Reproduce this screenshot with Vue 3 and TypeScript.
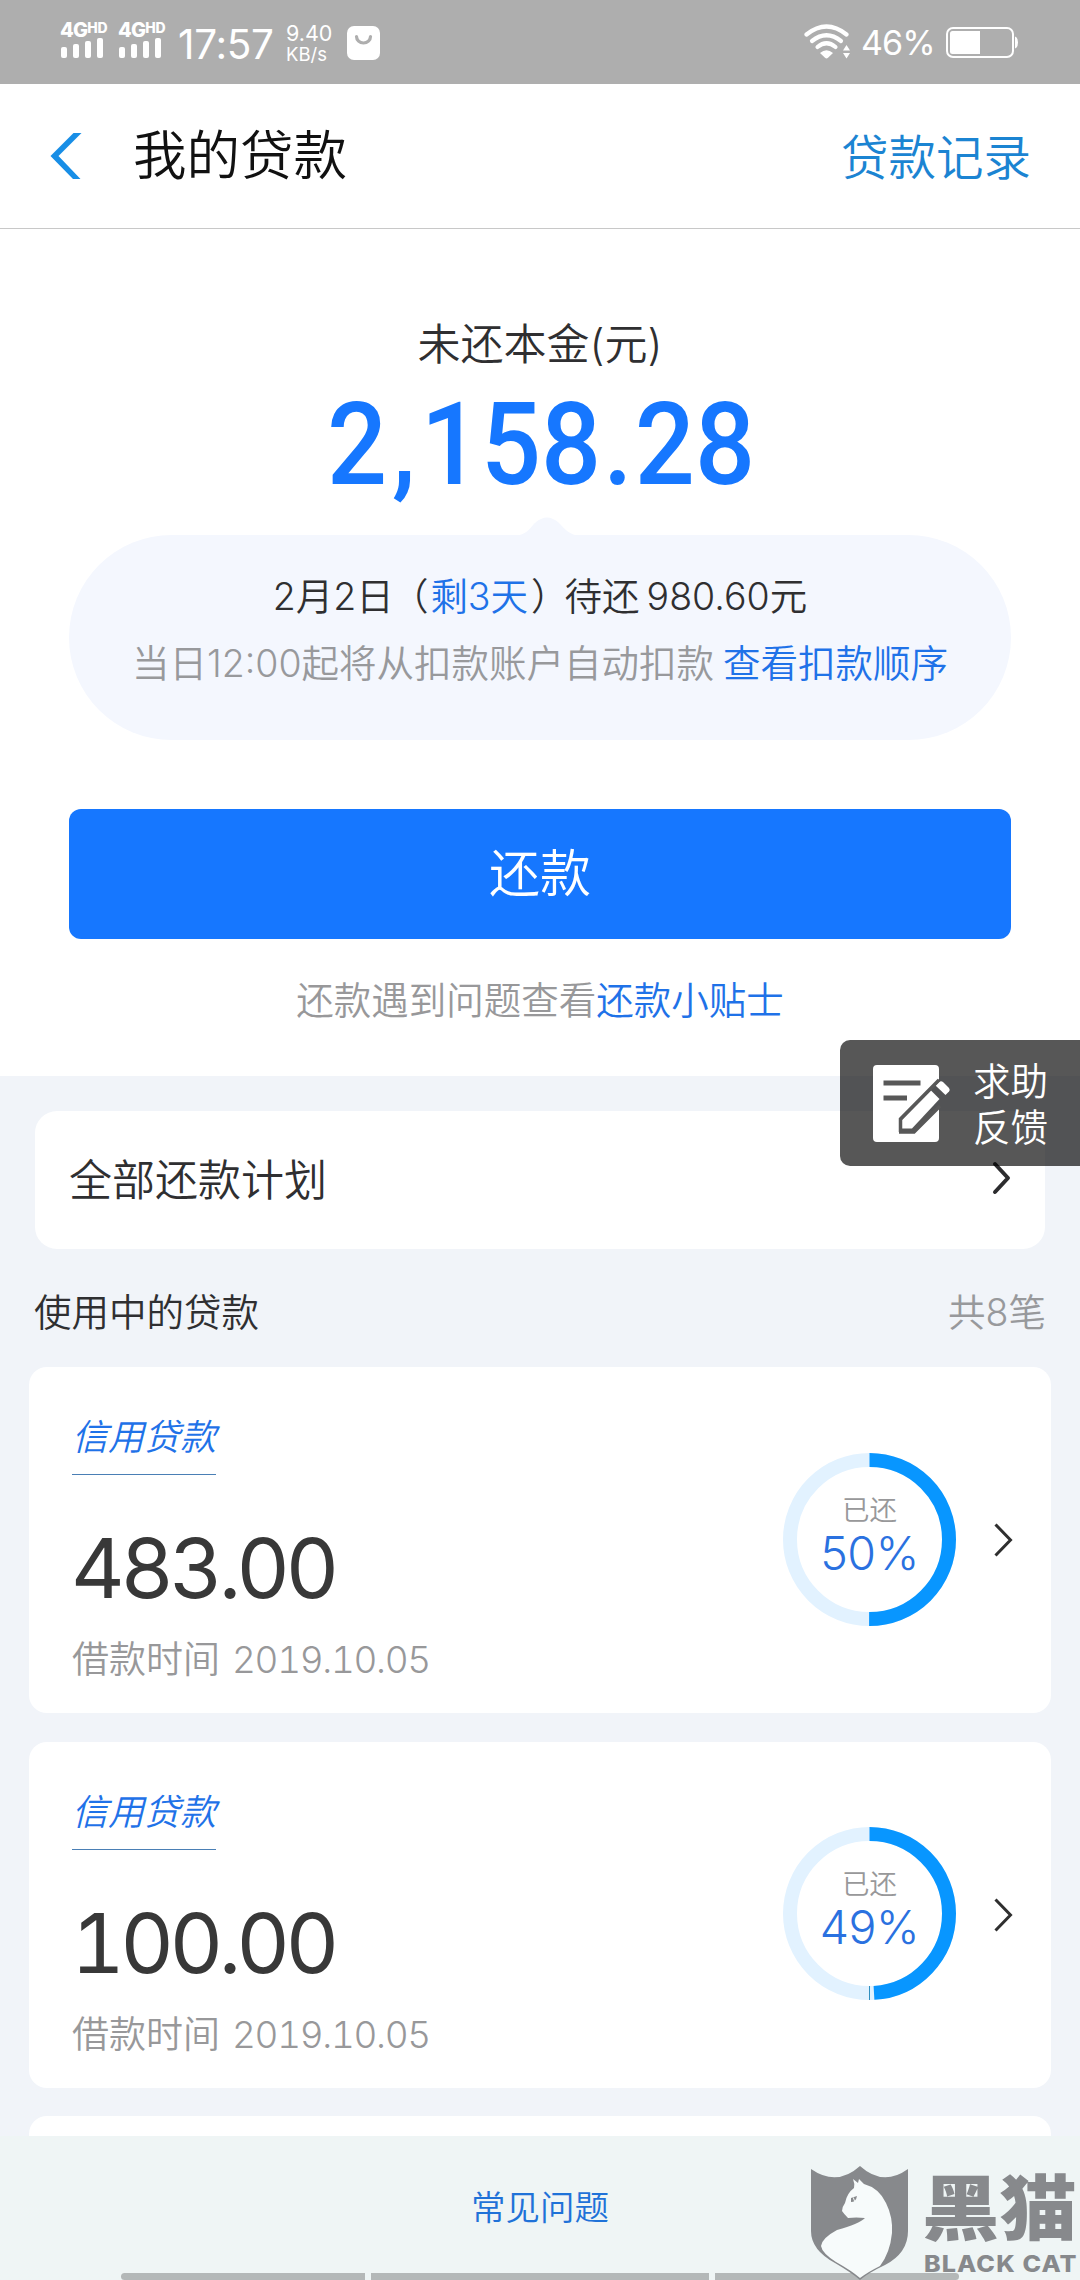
<script setup lang="ts">
interface Loan {
  id: number
  type: string
  amount: string
  date: string
  percent: number
}

const loans: Loan[] = [
  { id: 1, type: '信用贷款', amount: '483.00', date: '2019.10.05', percent: 50 },
  { id: 2, type: '信用贷款', amount: '100.00', date: '2019.10.05', percent: 49 },
]

const RADIUS = 79.5
const CIRC = 2 * Math.PI * RADIUS
const dash = (percent: number): string => `${(CIRC * percent) / 100} ${CIRC}`
</script>

<template>
  <div class="page">
    <div class="status">
      <div v-for="n in 2" :key="n" class="signal">
        <div class="net"><b>4G</b><i>HD</i></div>
        <div class="bars"><span class="b1" /><span class="b2" /><span class="b3" /><span class="b4" /></div>
      </div>
      <div class="clock">17:57</div>
      <div class="speed"><span class="rate">9.40</span><span class="unit">KB/s</span></div>
      <svg class="bag" width="33" height="34" viewBox="0 0 33 34">
        <rect width="33" height="34" rx="7" fill="#fff" />
        <path d="M9.5 10.500a7 6.500 0 0 0 14 0" fill="none" stroke="#aeaeae" stroke-width="3.200" stroke-linecap="round" />
      </svg>
      <div class="spacer" />
      <svg class="wifi" width="48" height="36" viewBox="0 0 48 36">
        <g fill="none" stroke="#fff" stroke-width="4.200" stroke-linecap="round">
          <path d="M2.500 10.500Q22.500 -5.500 42.500 10.500" />
          <path d="M8 17Q22.500 5.500 37 17" />
          <path d="M13.500 23Q22.500 15.500 31.500 23" />
        </g>
        <path d="M16 29Q22.500 23.500 29 29L24 33.800Q22.500 35 21 33.800Z" fill="#fff" />
        <path d="M39 26.500L42.500 21L46 26.500ZM39 29L42.500 34.500L46 29Z" fill="#fff" />
      </svg>
      <div class="level">46%</div>
      <svg class="battery" width="73" height="32" viewBox="0 0 73 32">
        <rect x="1" y="1" width="66" height="29" rx="6" fill="none" stroke="#fff" stroke-width="2" />
        <path d="M6.500 4H34V27H6.500Q4 27 4 24.500V6.500Q4 4 6.500 4Z" fill="#fff" />
        <path d="M69 9.500Q72 10.500 72 15.500T69 21.500Z" fill="#fff" />
      </svg>
    </div>

    <header class="nav">
      <svg class="back" width="34" height="48" viewBox="0 0 34 48">
        <path d="M31.500 1H23.500L0.500 24L23 47H30.500L8.500 24Z" fill="#188ee6" />
      </svg>
      <h1 class="title">我的贷款</h1>
      <a class="records">贷款记录</a>
    </header>

    <section class="summary">
      <div class="label">未还本金(元)</div>
      <div class="total"><div class="total-in">2<span class="comma">,</span>158<span class="dot">.</span>28</div></div>
      <div class="bubble">
        <svg class="notch" width="68" height="19" viewBox="0 0 68 19">
          <path d="M0 19C14 18 16 12 22 6Q34 -5 46 6C52 12 56 18 68 19Z" fill="#f4f7fe" />
        </svg>
        <div class="due">2月2日<span class="open">（</span><em>剩3天</em><span class="close">）</span>待还<span class="due-sum">980.60</span>元</div>
        <div class="auto">当日12:00起将从扣款账户自动扣款<em class="order">查看扣款顺序</em></div>
      </div>
      <button class="repay">还款</button>
      <div class="tips">还款遇到问题查看<em>还款小贴士</em></div>
    </section>

    <main class="body">
      <div class="plan">
        <span class="plan-text">全部还款计划</span>
        <svg class="plan-arrow" width="20" height="34" viewBox="0 0 20 34">
          <path d="M3 3L16 17L3 31" fill="none" stroke="#2c2c2e" stroke-width="4" stroke-linecap="round" stroke-linejoin="round" />
        </svg>
      </div>
      <div class="section">
        <span>使用中的贷款</span>
        <span class="count">共8笔</span>
      </div>
      <div class="list">
        <article v-for="loan in loans" :key="loan.id" class="loan">
          <div class="info">
            <div class="type">{{ loan.type }}</div>
            <div class="amount">{{ loan.amount }}</div>
            <div class="date">借款时间<span class="day">{{ loan.date }}</span></div>
          </div>
          <div class="ring">
            <svg class="ring-svg" width="173" height="173" viewBox="0 0 173 173">
              <circle cx="86.500" cy="86.500" :r="RADIUS" fill="none" stroke="#e2f2ff" stroke-width="14" />
              <circle
                cx="86.500" cy="86.500" :r="RADIUS" fill="none" stroke="#0896ff" stroke-width="14"
                :stroke-dasharray="dash(loan.percent)" transform="rotate(-90 86.500 86.500)"
              />
              <path v-if="loan.percent < 50" d="M86.500 159V173" stroke="#2f8fc0" stroke-width="1" />
            </svg>
            <div class="paid">已还</div>
            <div class="pct">{{ loan.percent }}%</div>
          </div>
          <svg class="arrow" width="20" height="34" viewBox="0 0 20 34">
            <path d="M2.500 1.500L17.500 17L2.500 32.500" fill="none" stroke="#2f2f2f" stroke-width="3" />
          </svg>
        </article>
        <article class="loan next" />
      </div>
    </main>

    <footer class="footer">
      <div class="faq">常见问题</div>
      <div class="gestures"><span class="g1" /><span class="g2" /><span class="g3" /></div>
    </footer>

    <div class="help">
      <svg width="78" height="78" viewBox="0 0 78 78">
        <path d="M4 0H62Q66 0 66 4V14L26 54V67H41L66 42V73Q66 77 62 77H4Q0 77 0 73V4Q0 0 4 0Z" fill="#fff" />
        <path d="M10.500 18H47.500M10.500 33H34" stroke="#585858" stroke-width="5" />
        <path d="M29 55L58 25.500L66.500 34L39 63.500H29Z" fill="#fff" />
        <path d="M62.500 20.500L66 17Q68 15.500 70 17L76 23Q77.500 25 76 26.500L72.500 30Z" fill="#fff" />
        <path d="M27.500 67V54L66 15" fill="none" stroke="#585858" stroke-width="3.500" />
        <path d="M26 67H41L67 41" fill="none" stroke="#585858" stroke-width="3.500" />
      </svg>
      <div class="help-text">求助<br>反馈</div>
    </div>

    <div class="mark">
      <svg width="98" height="116" viewBox="0 0 98 116">
        <path d="M0 4Q26 22 49 1Q72 22 97 4V66Q97 88 74 100Q57 108 49 115Q41 108 24 98Q0 85 0 66Z" fill="#87898c" />
        <path d="M42 14L47 18L48 14L53 19Q68 23 75 38Q82 52 81 68Q79 88 69 101Q57 107 49 113Q41 106 25 97Q11 88 10 81Q11 73 26 65Q48 59 54 53Q45 52 37 53Q33 49 31 46Q31 42 34 38Q36 28 43 23Q44 19 42 14Z" fill="#f7fbfb" />
        <path d="M40 33L46 31Q45 37 40 37Z" fill="#87898c" />
        <path d="M42.300 32.500L43.500 36" stroke="#f7fbfb" stroke-width="1" />
      </svg>
      <div class="mark-text">
        <div class="mark-cn">黑猫</div>
        <div class="mark-en">BLACK CAT</div>
      </div>
    </div>
  </div>
</template>

<style>
body {
  margin: 0;
}
</style>

<style scoped>
.page {
  position: relative;
  display: flex;
  flex-direction: column;
  width: 1080px;
  height: 2280px;
  overflow: hidden;
  background: #fff;
  color: #2f2f31;
  font-family: Inter, "Noto Sans CJK SC", sans-serif;
  font-weight: 350;
  font-size: 37.5px;
  white-space: nowrap;
}
em {
  font-style: normal;
  color: #1f72e8;
}
.status {
  flex: none;
  box-sizing: border-box;
  height: 84px;
  padding: 0 61px 0 60px;
  display: flex;
  align-items: flex-start;
  background: #aeaeae;
  color: #fff;
}
.signal {
  width: 58px;
  padding-top: 22px;
}
.net {
  display: flex;
  height: 16px;
  line-height: 16px;
  letter-spacing: -0.8px;
}
.net b {
  font: 800 20px/16px Inter, sans-serif;
}
.net i {
  font: 800 14px/11px Inter, sans-serif;
  letter-spacing: -0.3px;
}
.bars {
  display: flex;
  align-items: flex-end;
  gap: 6px;
  height: 20px;
  padding-left: 1px;
}
.bars span {
  width: 6px;
  border-radius: 2px;
  background: #fff;
}
.bars .b1 { height: 11px; }
.bars .b2 { height: 14px; }
.bars .b3 { height: 17px; }
.bars .b4 { height: 20px; }
.clock {
  width: 110px;
  padding-left: 2px;
  box-sizing: border-box;
  margin-top: 20px;
  line-height: 50px;
  font-size: 40.5px;
  font-weight: 400;
  letter-spacing: -0.3px;
}
.speed {
  display: flex;
  flex-direction: column;
  width: 61px;
  padding-top: 23px;
  font-weight: 400;
}
.rate {
  font-size: 21.5px;
  line-height: 20px;
}
.unit {
  font-size: 18.5px;
  line-height: 22px;
}
.bag {
  margin-top: 26px;
}
.spacer {
  flex: 1;
}
.wifi {
  margin: 24px 9px 0 0;
}
.level {
  width: 85px;
  margin-top: 18px;
  line-height: 50px;
  font-size: 34px;
  font-weight: 400;
  letter-spacing: -0.9px;
}
.battery {
  margin-top: 27px;
}
.nav {
  flex: none;
  box-sizing: border-box;
  height: 145px;
  padding: 0 49px 0 50px;
  display: flex;
  align-items: center;
  border-bottom: 1px solid #c8c8c8;
}
.title {
  flex: 1;
  margin: 0 0 0 49px;
  font-size: 53.5px;
  font-weight: inherit;
  line-height: 80px;
  color: #111;
}
.records {
  margin-top: 4px;
  font-size: 47.5px;
  line-height: 80px;
  color: #1b84d2;
}
.summary {
  flex: none;
  height: 847px;
  display: flex;
  flex-direction: column;
  align-items: center;
}
.label {
  margin-top: 85px;
  font-size: 43px;
  line-height: 60px;
}
.total {
  display: flex;
  justify-content: center;
  height: 110px;
  margin-top: 16px;
}
.total-in {
  font: 500 115.5px/110px Roboto, sans-serif;
  color: #1677ff;
  transform: translateX(1px) scaleX(0.915);
}
.comma,
.dot {
  display: inline-block;
  width: 37px;
  text-align: center;
}
.bubble {
  position: relative;
  box-sizing: border-box;
  width: 942px;
  height: 205px;
  margin-top: 35px;
  padding-top: 28px;
  border-radius: 103px;
  background: #f4f7fe;
  text-align: center;
}
.notch {
  position: absolute;
  left: 444px;
  top: -18px;
}
.due,
.auto {
  height: 67px;
  line-height: 67px;
}
.open {
  margin: 0 2px 0 -3px;
}
.close {
  margin: 0 -4px 0 3px;
}
.due-sum {
  margin-left: 7px;
}
.auto {
  color: #98999c;
}
.order {
  margin-left: 9px;
}
.repay {
  width: 942px;
  height: 130px;
  margin-top: 69px;
  padding: 0 0 8px;
  border: 0;
  border-radius: 12px;
  background: #1677ff;
  color: #fff;
  font: inherit;
  font-size: 51px;
}
.tips {
  margin-top: 32px;
  line-height: 60px;
  color: #98989a;
}
.body {
  flex: none;
  box-sizing: border-box;
  height: 1060px;
  padding: 35px 29px 0;
  overflow: hidden;
  background: #f1f4f9;
}
.plan {
  box-sizing: border-box;
  display: flex;
  align-items: center;
  justify-content: space-between;
  height: 138px;
  margin: 0 6px;
  padding: 0 33px 0 34px;
  border-radius: 22px;
  background: #fff;
  font-size: 43px;
}
.plan-text {
  padding-bottom: 7px;
}
.plan-arrow {
  margin-top: -5px;
}
.section {
  display: flex;
  justify-content: space-between;
  height: 118px;
  padding: 4px 5px 0;
  line-height: 120px;
  box-sizing: border-box;
}
.count {
  color: #98999c;
}
.list {
  display: flex;
  flex-direction: column;
  gap: 28.5px;
}
.loan {
  flex: none;
  box-sizing: border-box;
  display: flex;
  align-items: center;
  height: 346px;
  padding: 0 38px 0 43px;
  border-radius: 18px;
  background: #fff;
}
.info {
  flex: 1;
  height: 346px;
}
.type {
  width: 144px;
  height: 108px;
  margin-bottom: 46px;
  padding-top: 32px;
  box-sizing: border-box;
  border-bottom: 1px solid #4a7fb5;
  font-size: 36px;
  font-style: italic;
  line-height: 76px;
  color: #1f72e8;
}
.amount {
  height: 95px;
  margin-left: -1px;
  font-size: 83px;
  font-weight: 400;
  line-height: 95px;
  letter-spacing: -4.6px;
  font-feature-settings: "tnum";
  color: #383838;
}
.date {
  margin-top: 14px;
  line-height: 60px;
  font-size: 37px;
  color: #98989a;
}
.day {
  margin-left: 12px;
  font-feature-settings: "tnum";
  letter-spacing: -1.35px;
}
.ring {
  position: relative;
  width: 173px;
  height: 173px;
  margin: -2px 37px 0 0;
  text-align: center;
}
.ring-svg {
  position: absolute;
  inset: 0;
}
.paid {
  padding-top: 40px;
  font-size: 27.5px;
  line-height: 34px;
  color: #98989a;
}
.pct {
  font-size: 46.5px;
  line-height: 52px;
  letter-spacing: -0.4px;
  color: #2a71e0;
}
.footer {
  flex: 1;
  display: flex;
  flex-direction: column;
  background: #eff5f5;
}
.faq {
  height: 130px;
  padding-top: 7px;
  text-align: center;
  font-size: 34.5px;
  line-height: 130px;
  color: #1f72d8;
}
.gestures {
  display: flex;
  gap: 6px;
  height: 7px;
  padding-left: 121px;
}
.gestures span {
  background: #b4b8b8;
}
.gestures .g1 { width: 244px; border-radius: 4px 0 0 4px; }
.gestures .g2 { width: 338px; }
.gestures .g3 { width: 244px; border-radius: 0 4px 4px 0; }
.help {
  position: absolute;
  left: 840px;
  top: 1040px;
  box-sizing: border-box;
  display: flex;
  width: 240px;
  height: 126px;
  padding: 25px 0 0 33px;
  border-radius: 10px 0 0 10px;
  background: rgba(0, 0, 0, 0.66);
  color: #fff;
}
.help-text {
  margin: -6px 0 0 22px;
  line-height: 46px;
}
.mark {
  position: absolute;
  left: 811px;
  top: 2165px;
  display: flex;
  color: #87898c;
}
.mark-text {
  margin-left: 15px;
}
.mark-cn {
  height: 84px;
  margin-left: -2px;
  font: 900 71px/90px "Liberation Sans", "Noto Sans CJK SC", sans-serif;
  transform: scaleX(1.09);
  transform-origin: 0 0;
}
.mark-en {
  font: 800 22.5px/30px Inter, sans-serif;
  letter-spacing: 1px;
  transform: scaleX(1.115);
  transform-origin: 0 0;
}
</style>
